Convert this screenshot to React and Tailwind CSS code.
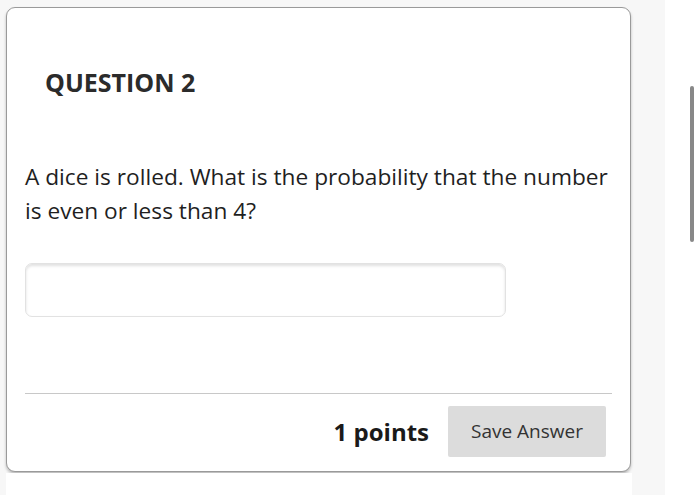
export default function App() {
  return (
    <div className="relative flex h-[495px] w-[700px] overflow-hidden bg-white" style={{ fontFamily: '"Open Sans", sans-serif' }}>
      <div className="flex h-full w-[665px] flex-col bg-[#f7f7f7] pl-[6px] pt-[7px]">
        <div className="flex h-[465px] w-[625px] shrink-0 flex-col rounded-[9px] border border-[#9a9a9a] bg-white px-[18px] shadow-[0_2px_3px_rgba(0,0,0,0.25)]">
          <div className="shrink-0 pl-[20px] pt-[57px] text-[25px] font-bold leading-[34px] text-[#2b2b2b]">QUESTION 2</div>
          <div className="mt-[61px] shrink-0 text-[22.7px] leading-[34px] text-[#1f1f1f]">
            A dice is rolled. What is the probability that the number is even or less than 4?
          </div>
          <div className="mt-[35px] h-[54px] w-[481px] shrink-0 rounded-[7px] border border-[#e2e2e2] bg-white shadow-[inset_0_2px_3px_rgba(0,0,0,0.12)]" />
          <div className="mt-[76px] h-px w-full shrink-0 bg-[#c8c8c8]" />
          <div className="mt-[12px] flex shrink-0 items-center justify-end gap-[19px] pr-[6px]">
            <span className="text-[24px] font-bold text-[#1a1a1a]">1 points</span>
            <div className="flex h-[51px] w-[158px] items-center justify-center rounded-[2px] bg-[#dcdcdc] text-[19px] text-[#333]">Save Answer</div>
          </div>
        </div>
        <div className="mt-[1px] w-[626px] flex-1 bg-white" />
      </div>
      <div className="absolute left-[690px] top-[86px] h-[156px] w-[4px] rounded-full bg-[#888]" />
    </div>
  );
}
